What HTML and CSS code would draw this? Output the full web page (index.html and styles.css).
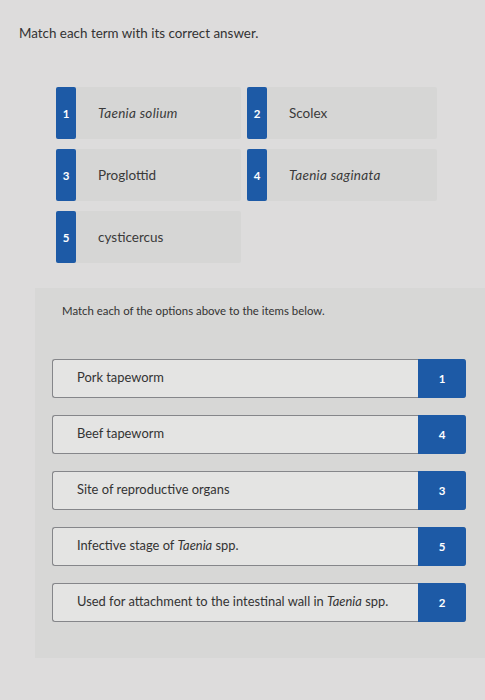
FILE: index.html
```html
<!DOCTYPE html>
<html>
<head>
<meta charset="utf-8">
<link rel="stylesheet" href="styles.css">
</head>
<body>
<div class="page">
  <p class="title">Match each term with its correct answer.</p>
  <div class="terms">
    <div class="term"><span class="num">1</span><span class="label"><i>Taenia solium</i></span></div>
    <div class="term"><span class="num">2</span><span class="label">Scolex</span></div>
    <div class="term"><span class="num">3</span><span class="label">Proglottid</span></div>
    <div class="term"><span class="num">4</span><span class="label"><i>Taenia saginata</i></span></div>
    <div class="term"><span class="num">5</span><span class="label">cysticercus</span></div>
  </div>
  <div class="panel">
    <p class="instr">Match each of the options above to the items below.</p>
    <div class="answers">
      <div class="answer"><span class="text">Pork tapeworm</span><span class="slot">1</span></div>
      <div class="answer"><span class="text">Beef tapeworm</span><span class="slot">4</span></div>
      <div class="answer"><span class="text">Site of reproductive organs</span><span class="slot">3</span></div>
      <div class="answer"><span class="text">Infective stage of <i>Taenia</i> spp.</span><span class="slot">5</span></div>
      <div class="answer"><span class="text">Used for attachment to the intestinal wall in <i>Taenia</i> spp.</span><span class="slot">2</span></div>
    </div>
  </div>
</div>
</body>
</html>
```
FILE: styles.css
```css
html, body {
  margin: 0;
  padding: 0;
}
body {
  background: #dddcdc;
  font-family: Lato, "Open Sans", sans-serif;
  color: #3a3a3a;
  width: 485px;
  height: 700px;
  overflow: hidden;
}
.page {
  padding-top: 25px;
}
.title {
  margin: 0 0 0 19px;
  font-size: 13.4px;
  line-height: 17px;
  color: #333;
}
.terms {
  margin: 45px 0 0 56px;
  display: grid;
  grid-template-columns: 185px 190px;
  column-gap: 6px;
  row-gap: 10px;
}
.term {
  display: flex;
  height: 52px;
  background: #d6d6d5;
  border-radius: 2px;
}
.num {
  width: 20px;
  flex: none;
  background: #1d5aa6;
  color: #fff;
  font-weight: 700;
  font-size: 11.5px;
  border-radius: 2px;
  display: flex;
  align-items: center;
  justify-content: center;
}
.label {
  display: flex;
  align-items: center;
  padding-left: 22px;
  font-size: 13.5px;
  color: #3a3a3a;
}
.label i {
  letter-spacing: 0.3px;
}
.panel {
  margin: 25px 0 0 35px;
  height: 370px;
  background: #d7d7d6;
  padding-top: 16px;
  box-sizing: border-box;
}
.instr {
  margin: 0 0 0 27px;
  font-size: 11.4px;
  line-height: 14px;
  color: #333;
}
.answers {
  margin: 41px 0 0 17px;
  width: 414px;
  display: flex;
  flex-direction: column;
  gap: 17px;
}
.answer {
  display: flex;
  height: 39px;
  border: 1px solid #85868a;
  border-right: none;
  border-radius: 3px;
  background: #e4e4e3;
  box-sizing: border-box;
}
.text {
  flex: 1;
  padding: 9px 0 0 24px;
  font-size: 12.9px;
  color: #333;
}
.slot {
  width: 48px;
  flex: none;
  margin: -1px 0;
  background: #1d5aa6;
  color: #fff;
  font-weight: 700;
  font-size: 11.5px;
  border-radius: 0 3px 3px 0;
  display: flex;
  align-items: center;
  justify-content: center;
}
```
